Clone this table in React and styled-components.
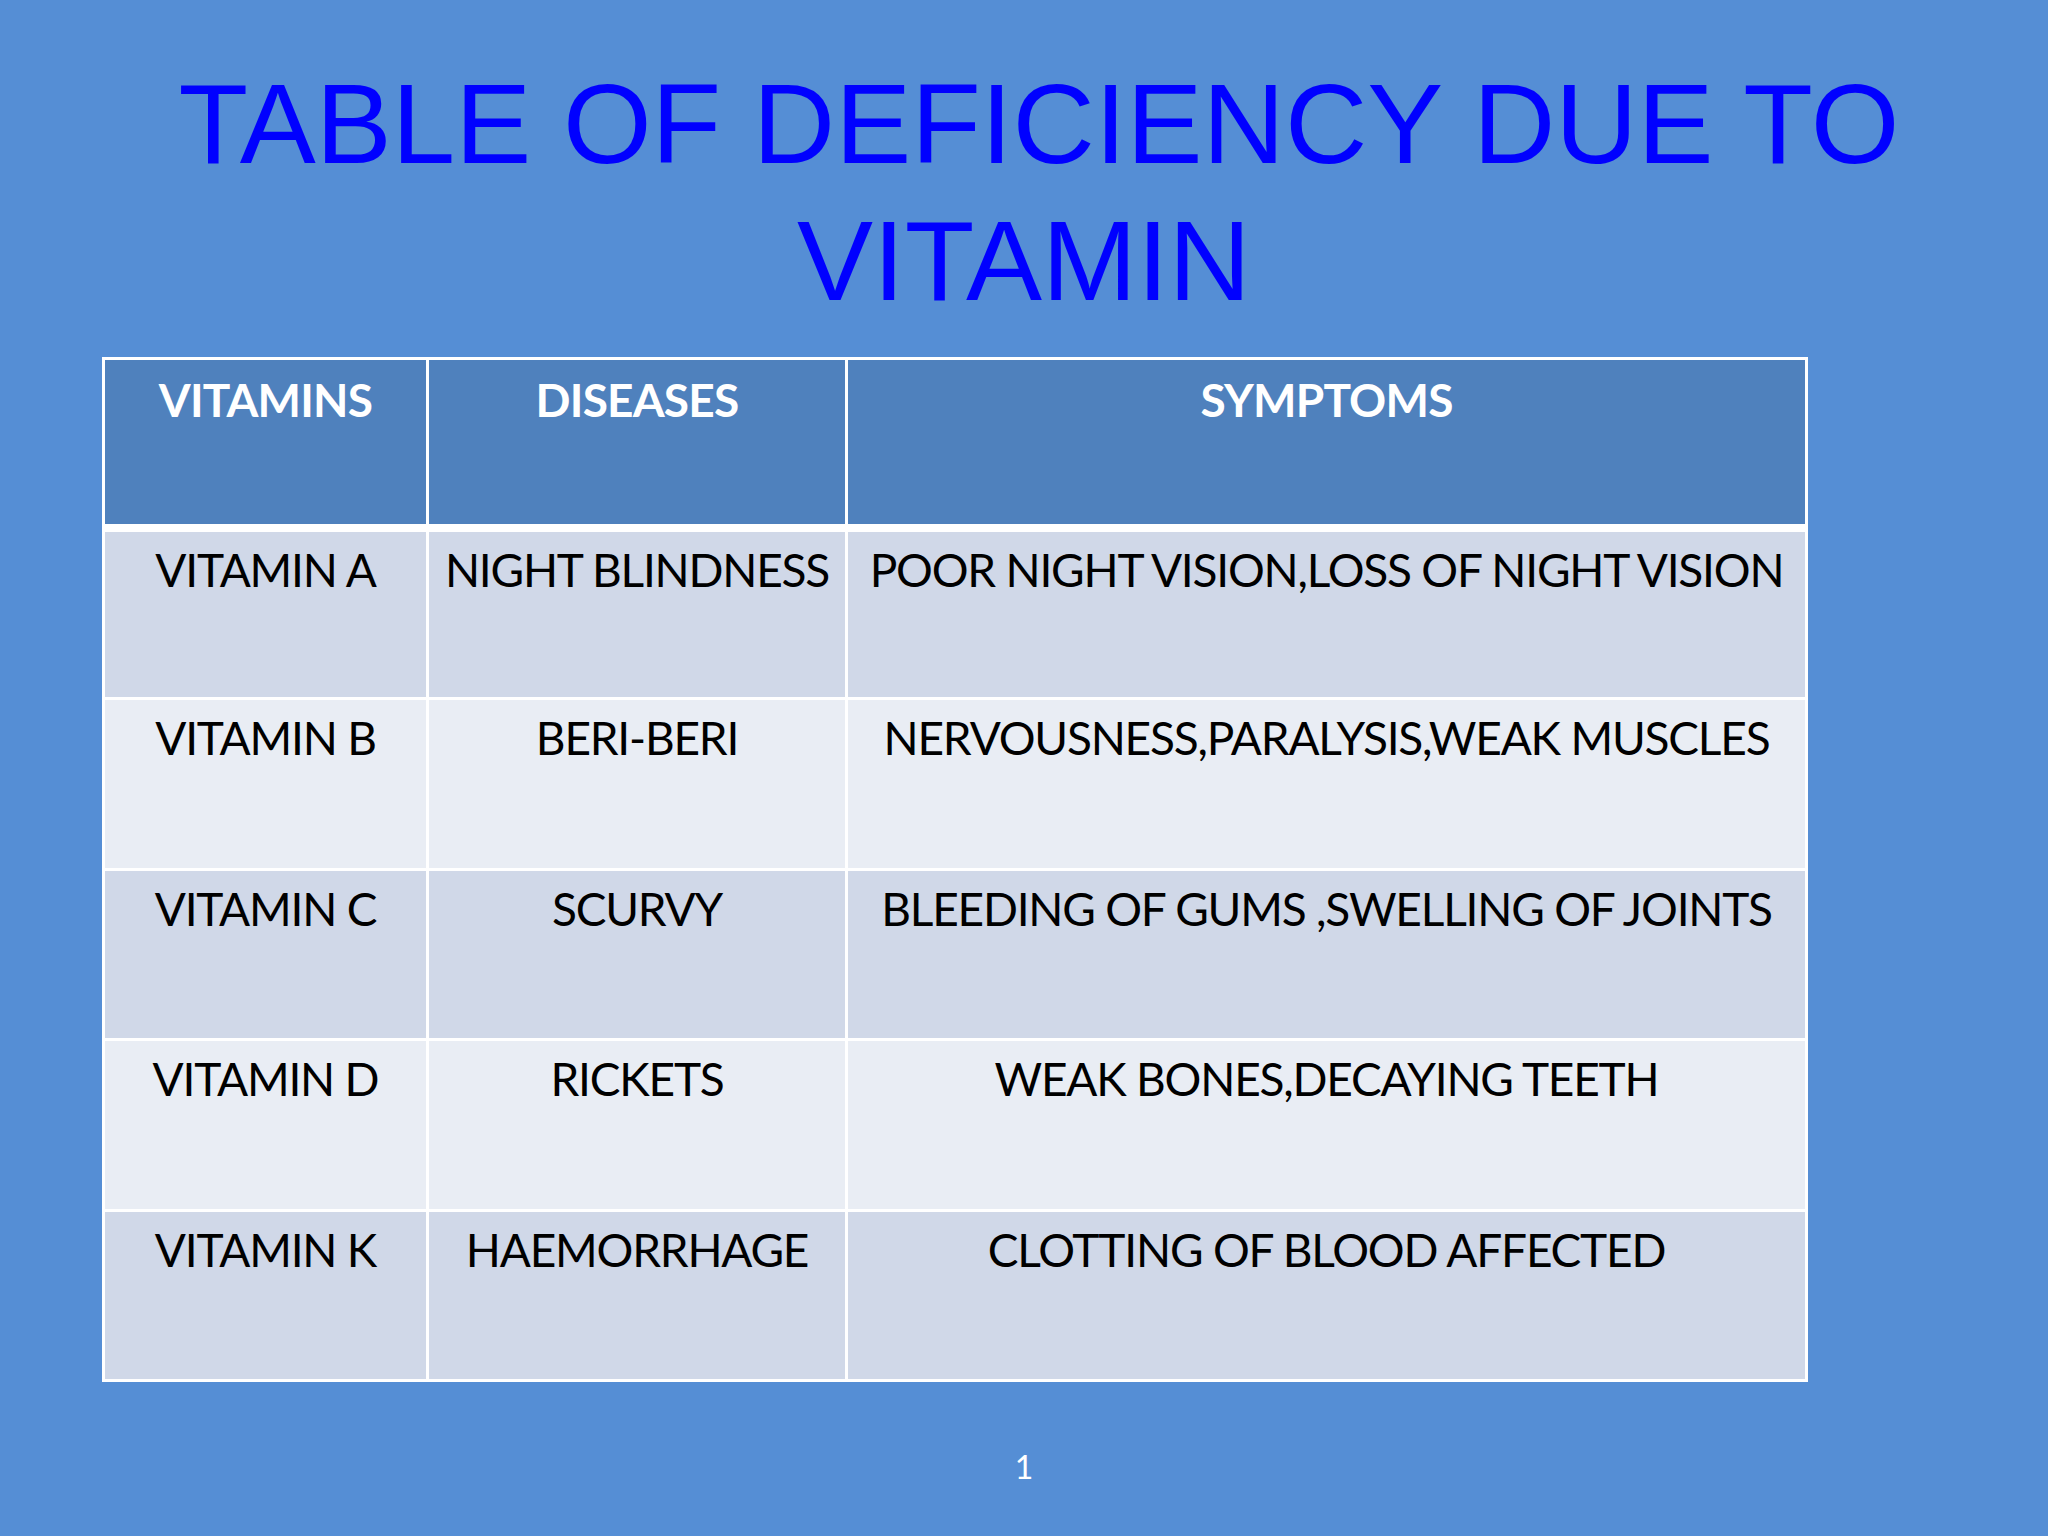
import React from 'react';
import styled, { createGlobalStyle } from 'styled-components';

const rows = [
	{ vitamin: 'VITAMIN A', disease: 'NIGHT BLINDNESS', symptoms: 'POOR NIGHT VISION,LOSS OF NIGHT VISION' },
	{ vitamin: 'VITAMIN B', disease: 'BERI-BERI', symptoms: 'NERVOUSNESS,PARALYSIS,WEAK MUSCLES' },
	{ vitamin: 'VITAMIN C', disease: 'SCURVY', symptoms: 'BLEEDING OF GUMS ,SWELLING OF JOINTS' },
	{ vitamin: 'VITAMIN D', disease: 'RICKETS', symptoms: 'WEAK BONES,DECAYING TEETH' },
	{ vitamin: 'VITAMIN K', disease: 'HAEMORRHAGE', symptoms: 'CLOTTING OF BLOOD AFFECTED' },
];

const App = () => {
	return (
		<>
			<GlobalStyle />
			<Slide>
				<Title>
					<TitleLine $indent={30}>TABLE OF DEFICIENCY DUE TO</TitleLine>
					<TitleLine>VITAMIN</TitleLine>
				</Title>
				<Table>
					<HeadCell>VITAMINS</HeadCell>
					<HeadCell>DISEASES</HeadCell>
					<HeadCell>SYMPTOMS</HeadCell>
					{rows.map((row, i) => (
						<React.Fragment key={row.vitamin}>
							<Cell $alt={i % 2 === 1}>{row.vitamin}</Cell>
							<Cell $alt={i % 2 === 1}>{row.disease}</Cell>
							<Cell $alt={i % 2 === 1}>{row.symptoms}</Cell>
						</React.Fragment>
					))}
				</Table>
				<PageNumber>1</PageNumber>
			</Slide>
		</>
	);
};

const GlobalStyle = createGlobalStyle`
	html, body {
		margin: 0;
		padding: 0;
	}
	body {
		background: #558ed5;
	}
`;

const Slide = styled.div`
	width: 2048px;
	height: 1536px;
	background: #558ed5;
	display: flex;
	flex-direction: column;
	align-items: center;
	overflow: hidden;
`;

const Title = styled.h1`
	margin: 0;
	padding-top: 55px;
	display: flex;
	flex-direction: column;
	align-items: center;
	font-family: 'Liberation Sans', Arial, sans-serif;
	font-weight: 400;
	font-size: 114px;
	line-height: 137px;
	color: #0000ff;
`;

const TitleLine = styled.span`
	white-space: nowrap;
	padding-left: ${(p) => p.$indent || 0}px;
`;

const Table = styled.div`
	margin-top: 28px;
	margin-right: 138px;
	display: grid;
	grid-template-columns: 321px 416px 957px;
	grid-template-rows: 169px 165px repeat(4, 167.5px);
	gap: 3px;
	padding: 3px;
	background: #ffffff;
`;

const BaseCell = styled.div`
	display: flex;
	justify-content: center;
	align-items: flex-start;
	font-family: Lato, 'Open Sans', sans-serif;
	font-size: 46px;
	line-height: 55px;
	white-space: nowrap;
`;

const HeadCell = styled(BaseCell)`
	background: #4f81bd;
	border-bottom: 5px solid #ffffff;
	padding-top: 12px;
	color: #ffffff;
	font-weight: 700;
	letter-spacing: -0.8px;
`;

const Cell = styled(BaseCell)`
	background: ${(p) => (p.$alt ? '#e9edf4' : '#d0d8e8')};
	padding-top: 10px;
	color: #000000;
	letter-spacing: -1.2px;
`;

const PageNumber = styled.div`
	margin-top: 66px;
	font-family: Lato, 'Open Sans', sans-serif;
	font-size: 32px;
	line-height: 38px;
	color: #ffffff;
`;

export default App;
